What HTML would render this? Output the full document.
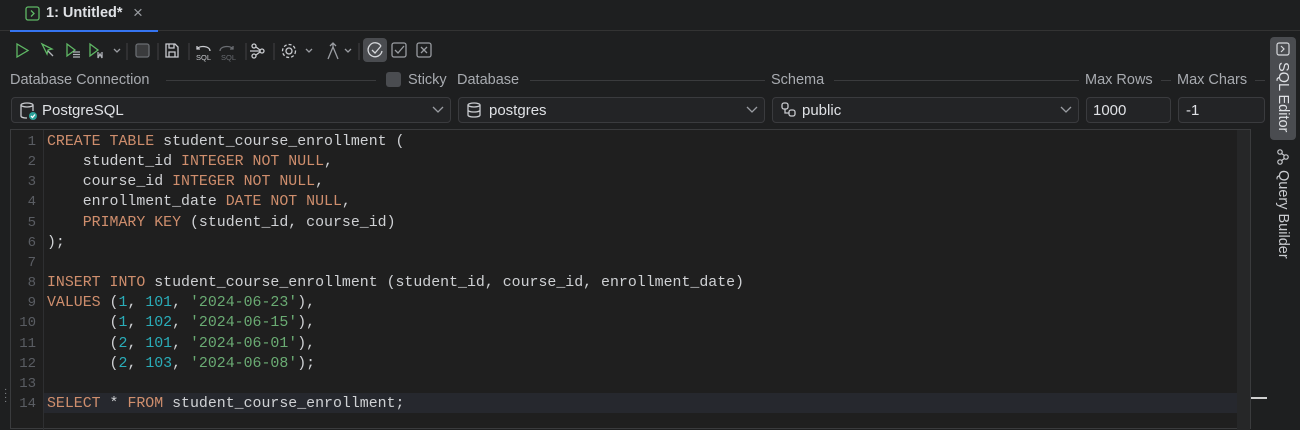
<!DOCTYPE html>
<html><head><meta charset="utf-8"><style>
*{box-sizing:border-box;margin:0;padding:0}
body{width:1300px;height:423px;background:#1e1f20;color:#cfd1d4;font-family:"Liberation Sans",sans-serif;font-size:14px;position:relative;overflow:hidden}
.abs{position:absolute}
.lbl{color:#a8abb0;font-size:14.5px}
.line{height:1px;background:#3a3b3d}
.box{border:1px solid #3a3b3e;border-radius:4px;background:#232426;height:26px}
.code{font-family:"Liberation Mono",monospace;font-size:14.9px;line-height:20.15px;white-space:pre;color:#cfd1d4}
.k{color:#cf8e6d}.n{color:#2aacb8}.s{color:#6aab73}
.gut{font-family:"Liberation Mono",monospace;font-size:14px;line-height:20.15px;color:#5a5d63;text-align:right;white-space:pre}
svg{position:absolute}
</style></head><body>
<div class="abs" style="left:0;top:0;width:1300px;height:31px;background:#1e1f20;border-bottom:1px solid #333"></div>
<svg style="left:25px;top:6px" width="15" height="15" viewBox="0 0 15 15"><rect x="1" y="1" width="13" height="13" rx="2" fill="none" stroke="#5fb865" stroke-width="1.3"/><path d="M6 4.5l3 3-3 3" fill="none" stroke="#5fb865" stroke-width="1.3"/></svg>
<div class="abs" style="left:46px;top:5px;font-weight:bold;font-size:14.5px;color:#dfe1e5">1: Untitled*</div>
<div class="abs" style="left:133px;top:3px;font-size:17px;color:#9a9da2">×</div>
<div class="abs" style="left:10px;top:30px;width:148px;height:2px;background:#3574f0"></div>
<svg style="left:10px;top:40px" width="450" height="22" viewBox="0 0 450 22" fill="none" stroke-width="1.3">
<path d="M7 4v13l11-6.5z" stroke="#5fb865"/>
<path d="M32 4l10 5-4 1-1 4z" stroke="#5fb865"/><path d="M38 11l5 5" stroke="#b0b3b8"/>
<path d="M57 4v12l8-6z" stroke="#5fb865"/><path d="M63 12h7M63 14.5h7M63 17h7" stroke="#b0b3b8"/>
<path d="M80 4v12l8-6z" stroke="#5fb865"/><path d="M88 12v6l2-4 2 4v-6" stroke="#b0b3b8"/>
<path d="M104 9l3 3 3-3" stroke="#9a9da2"/>
<path d="M117 3v17" stroke="#3a3b3d"/>
<rect x="126" y="4" width="13" height="13" rx="2" stroke="#6a6d72" fill="#3a3b3d"/>
<path d="M148 3v17" stroke="#3a3b3d"/>
<path d="M156 4h9l3 3v10h-12z M159 4v4h5v-4 M159 17v-5h6v5" stroke="#c9cbcf"/>
<path d="M179 3v17" stroke="#3a3b3d"/>
<path d="M200 11c0-5-10-6-13-2M187 6v3h3" stroke="#c9cbcf"/><text x="186" y="20" font-size="7.5" fill="#c9cbcf" stroke="none" font-family="Liberation Sans">SQL</text>
<path d="M210 11c0-5 10-6 13-2M223 6v3h-3" stroke="#6a6d72"/><text x="211" y="20" font-size="7.5" fill="#6a6d72" stroke="none" font-family="Liberation Sans">SQL</text>
<path d="M236 3v17" stroke="#3a3b3d"/>
<circle cx="244" cy="6" r="2" stroke="#c9cbcf"/><circle cx="252" cy="11" r="2" stroke="#c9cbcf"/><circle cx="244" cy="16" r="2" stroke="#c9cbcf"/><path d="M246 7l4 3M246 15l4-3M240 11h10" stroke="#c9cbcf"/>
<path d="M264 3v17" stroke="#3a3b3d"/>
<circle cx="279" cy="11" r="3" stroke="#c9cbcf"/><circle cx="279" cy="11" r="6.5" stroke="#c9cbcf" stroke-dasharray="3 2"/>
<path d="M296 9l3 3 3-3" stroke="#9a9da2"/>
<path d="M318 19l5-12 5 12M323 7v-3M320 6l3-3 3 3" stroke="#9a9da2"/>
<path d="M335 9l3 3 3-3" stroke="#9a9da2"/>
<path d="M349 3v17" stroke="#3a3b3d"/>
</svg>
<div class="abs" style="left:363px;top:38px;width:24px;height:24px;border-radius:4px;background:#4a4c50"></div>
<svg style="left:363px;top:38px" width="80" height="24" viewBox="0 0 80 24" fill="none" stroke-width="1.3">
<path d="M18 8a7 7 0 1 0 1 5" stroke="#d6d8dc"/><path d="M9 12l3 3 6-7" stroke="#d6d8dc"/>
<rect x="29" y="5" width="14" height="14" rx="2" stroke="#9a9da2"/><path d="M32 12l3 3 6-7" stroke="#9a9da2"/>
<rect x="54" y="5" width="14" height="14" rx="2" stroke="#9a9da2"/><path d="M58 9l6 6M64 9l-6 6" stroke="#9a9da2"/>
</svg>
<div class="abs lbl" style="left:10px;top:72px">Database Connection</div>
<div class="abs line" style="left:166px;top:80px;width:210px"></div>
<div class="abs" style="left:386px;top:72px;width:15px;height:15px;border-radius:3px;background:#4a4c50"></div>
<div class="abs lbl" style="left:408px;top:72px">Sticky</div>
<div class="abs lbl" style="left:457px;top:72px">Database</div>
<div class="abs line" style="left:530px;top:80px;width:235px"></div>
<div class="abs lbl" style="left:771px;top:72px">Schema</div>
<div class="abs line" style="left:834px;top:80px;width:245px"></div>
<div class="abs lbl" style="left:1085px;top:72px">Max Rows</div>
<div class="abs line" style="left:1161px;top:80px;width:10px"></div>
<div class="abs lbl" style="left:1177px;top:72px">Max Chars</div>
<div class="abs line" style="left:1255px;top:80px;width:10px"></div>
<div class="abs box" style="left:11px;top:97px;width:440px"></div>
<svg style="left:19px;top:101px" width="20" height="20" viewBox="0 0 20 20" fill="none" stroke="#c9cbcf" stroke-width="1.3"><ellipse cx="8" cy="4" rx="6" ry="2"/><path d="M2 4v11c0 1 2 2 6 2M14 4v6"/><circle cx="14" cy="15" r="4" fill="#2aa198" stroke="none"/><path d="M12 15l1.5 1.5 2.5-3" stroke="#fff"/></svg>
<div class="abs" style="left:42px;top:102px;font-size:15px;color:#dfe1e5">PostgreSQL</div>
<svg style="left:432px;top:104px" width="12" height="10"><path d="M1 3l5 5 5-5" fill="none" stroke="#9a9da2" stroke-width="1.3"/></svg>
<div class="abs box" style="left:458px;top:97px;width:307px"></div>
<svg style="left:466px;top:101px" width="18" height="18" viewBox="0 0 18 18" fill="none" stroke="#c9cbcf" stroke-width="1.3"><ellipse cx="8" cy="4" rx="6" ry="2"/><path d="M2 4v10c0 1 2 2 6 2s6-1 6-2V4M2 9c0 1 2 2 6 2s6-1 6-2"/></svg>
<div class="abs" style="left:489px;top:102px;font-size:15px;color:#dfe1e5">postgres</div>
<svg style="left:746px;top:104px" width="12" height="10"><path d="M1 3l5 5 5-5" fill="none" stroke="#9a9da2" stroke-width="1.3"/></svg>
<div class="abs box" style="left:772px;top:97px;width:307px"></div>
<svg style="left:780px;top:101px" width="18" height="18" viewBox="0 0 18 18" fill="none" stroke="#c9cbcf" stroke-width="1.3"><rect x="2" y="2" width="6" height="6" rx="2"/><rect x="9" y="9" width="6" height="6" rx="2"/><path d="M5 8v4h4"/></svg>
<div class="abs" style="left:802px;top:102px;font-size:15px;color:#dfe1e5">public</div>
<svg style="left:1060px;top:104px" width="12" height="10"><path d="M1 3l5 5 5-5" fill="none" stroke="#9a9da2" stroke-width="1.3"/></svg>
<div class="abs box" style="left:1086px;top:97px;width:85px"></div>
<div class="abs" style="left:1093px;top:102px;font-size:15px;color:#dfe1e5">1000</div>
<div class="abs box" style="left:1178px;top:97px;width:87px"></div>
<div class="abs" style="left:1186px;top:102px;font-size:15px;color:#dfe1e5">-1</div>
<div class="abs" style="left:10px;top:129px;width:1241px;height:300px;border:1px solid #3a3b3d;background:#1f1f1f"></div>
<div class="abs" style="left:43px;top:130px;width:1px;height:300px;background:#2e2f31"></div>
<div class="abs" style="left:1237px;top:130px;width:13px;height:300px;background:#262728"></div>
<div class="abs" style="left:44px;top:393px;width:1193px;height:20px;background:#26282e"></div>
<div class="abs" style="left:1251px;top:397px;width:16px;height:2px;background:#d0d0d0"></div>
<div class="abs" style="left:4px;top:388px;color:#8a8d92;font-size:10px;line-height:4px">·<br>·<br>·<br>·</div>
<div class="abs gut" style="left:14px;top:132px;width:22px">1
2
3
4
5
6
7
8
9
10
11
12
13
14</div>
<div class="abs code" style="left:47px;top:132px"><span class="k">CREATE TABLE</span> student_course_enrollment (
    student_id <span class="k">INTEGER NOT NULL</span>,
    course_id <span class="k">INTEGER NOT NULL</span>,
    enrollment_date <span class="k">DATE NOT NULL</span>,
    <span class="k">PRIMARY KEY</span> (student_id, course_id)
);

<span class="k">INSERT INTO</span> student_course_enrollment (student_id, course_id, enrollment_date)
<span class="k">VALUES</span> (<span class="n">1</span>, <span class="n">101</span>, <span class="s">'2024-06-23'</span>),
       (<span class="n">1</span>, <span class="n">102</span>, <span class="s">'2024-06-15'</span>),
       (<span class="n">2</span>, <span class="n">101</span>, <span class="s">'2024-06-01'</span>),
       (<span class="n">2</span>, <span class="n">103</span>, <span class="s">'2024-06-08'</span>);

<span class="k">SELECT</span> * <span class="k">FROM</span> student_course_enrollment;</div>
<div class="abs" style="left:1270px;top:37px;width:26px;height:103px;border-radius:4px;background:#4a4c50"></div>
<svg style="left:1276px;top:42px" width="14" height="14"><rect x="1" y="1" width="12" height="12" rx="2" fill="none" stroke="#d6d8dc" stroke-width="1.2"/><path d="M5 4l3 3-3 3" fill="none" stroke="#d6d8dc" stroke-width="1.2"/></svg>
<div class="abs" style="left:1275px;top:62px;transform-origin:0 0;transform:translate(16px,0) rotate(90deg);font-size:14.5px;color:#dfe1e5;white-space:nowrap">SQL Editor</div>
<svg style="left:1275px;top:148px" width="16" height="18" viewBox="0 0 16 18" fill="none" stroke="#c9cbcf" stroke-width="1.2"><circle cx="5" cy="4" r="2.2"/><circle cx="11" cy="9" r="2.2"/><circle cx="5" cy="14" r="2.2"/><path d="M6.5 5.5l3 2M6.5 12.5l3-2"/></svg>
<div class="abs" style="left:1275px;top:170px;transform-origin:0 0;transform:translate(16px,0) rotate(90deg);font-size:14.5px;color:#c9cbcf;white-space:nowrap">Query Builder</div>
</body></html>
